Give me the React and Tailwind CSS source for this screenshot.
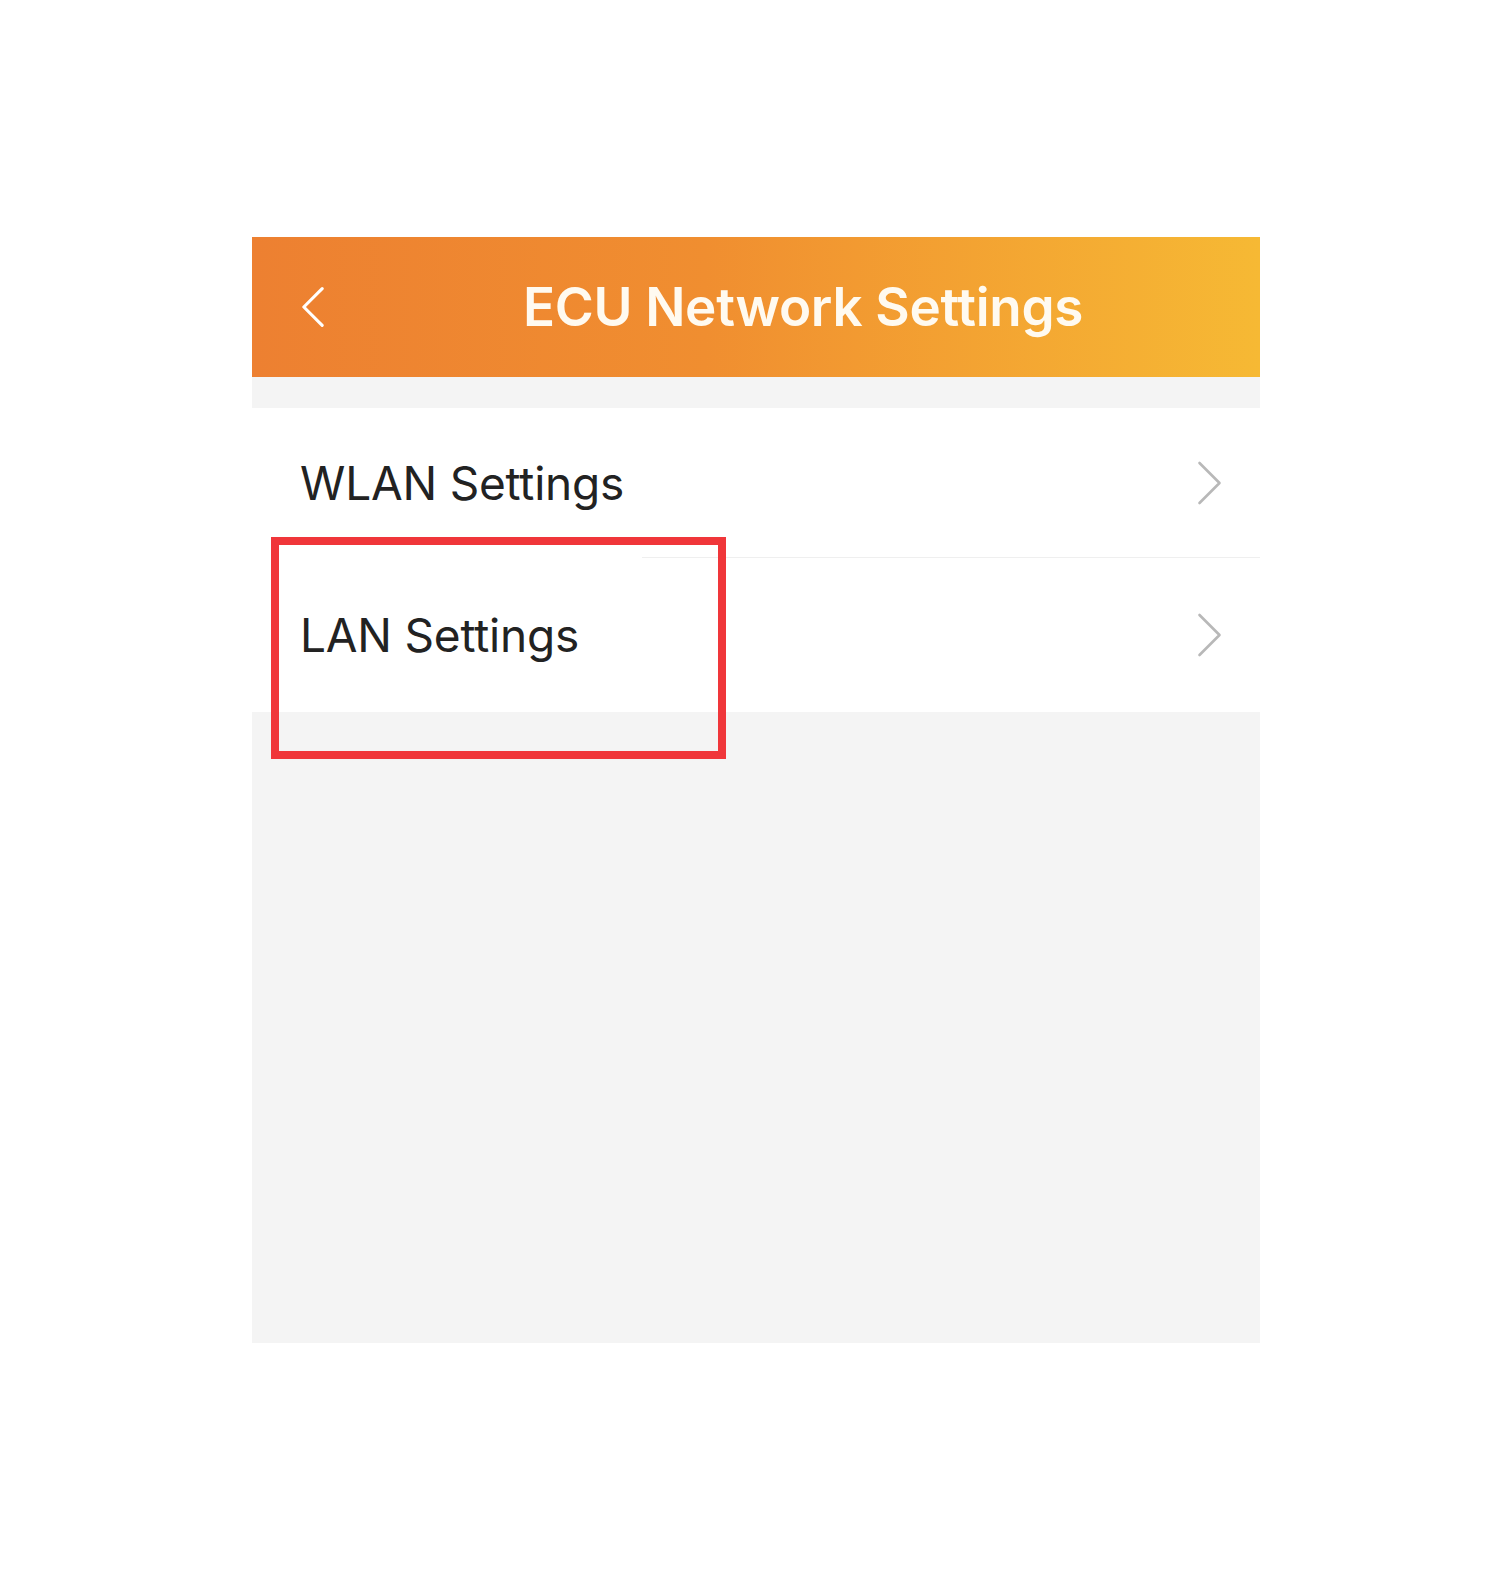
import { useState } from 'react'

const font = { fontFamily: 'Inter, "Noto Sans", sans-serif' }

function Chevron({ className, dir = 'right' }) {
  return (
    <svg viewBox="0 0 24 44" className={className} fill="none" stroke="currentColor" strokeLinecap="round" strokeLinejoin="round">
      {dir === 'right' ? <path d="M2 2 L22 22 L2 42" /> : <path d="M22 2 L2 22 L22 42" />}
    </svg>
  )
}

function Row({ label, divider, onClick }) {
  return (
    <button
      onClick={onClick}
      className="relative flex w-full items-center justify-between pl-[48px] pr-[38px] text-left h-full"
    >
      <span className="text-[46px] leading-none text-[#222222] tracking-[-0.2px]" style={font}>{label}</span>
      <Chevron className="w-[25px] h-[44px] text-[#b8b8b8] [stroke-width:2.6px]" />
      {divider && <div className="absolute bottom-0 left-[390px] right-0 h-px bg-[#efefef]" />}
    </button>
  )
}

export default function App() {
  const [selected, setSelected] = useState('lan')

  const items = [
    { id: 'wlan', label: 'WLAN Settings', h: 'h-[150px]' },
    { id: 'lan', label: 'LAN Settings', h: 'h-[154px]' }
  ]

  return (
    <div className="min-h-[1583px] w-full bg-white pt-[237px]">
      <div className="relative ml-[252px] w-[1008px]">
        {/* header */}
        <div className="flex h-[140px] items-center bg-gradient-to-r from-[#ed8031] via-[#f08e30] via-45% to-[#f6b934] pl-[50px]">
          <Chevron dir="left" className="w-[22px] h-[42px] text-white [stroke-width:3.4px]" />
          <div className="flex-1 pl-[22px] text-center">
            <span className="text-[53px] font-semibold leading-none text-[#fffaf0] tracking-[-0.3px]" style={font}>
              ECU Network Settings
            </span>
          </div>
        </div>

        <div className="h-[31px] bg-[#f4f4f4]" />

        {items.map((item, i) => (
          <div key={item.id} className={item.h + ' bg-white'}>
            <Row label={item.label} divider={i === 0} onClick={() => setSelected(item.id)} />
          </div>
        ))}

        <div className="h-[631px] bg-[#f4f4f4]" />

        {/* highlight box */}
        {selected === 'lan' && (
          <div className="pointer-events-none absolute left-[19px] top-[300px] h-[222px] w-[455px] border-[8px] border-[#f0363a]" />
        )}
      </div>
    </div>
  )
}
